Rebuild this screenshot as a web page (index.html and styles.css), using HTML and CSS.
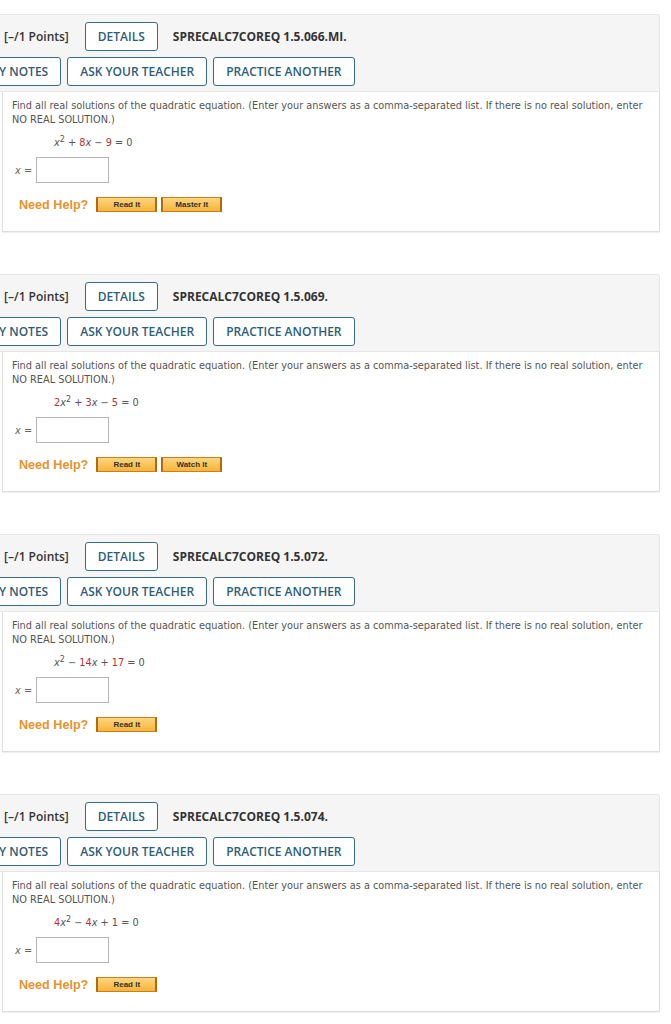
FILE: index.html
```html
<!DOCTYPE html>
<html lang="en">
<head>
  <meta charset="UTF-8" />
  <title>Assignment</title>
  <link rel="stylesheet" href="styles.css">
</head>
<body>
  <div class="page">

    <div class="question">
      <div class="q-head">
        <div class="head-row">
          <span class="points">[&ndash;/1 Points]</span>
          <button class="wa-btn">DETAILS</button>
          <span class="q-id">SPRECALC7COREQ 1.5.066.MI.</span>
        </div>
        <div class="head-row tools">
          <button class="wa-btn">MY NOTES</button>
          <button class="wa-btn">ASK YOUR TEACHER</button>
          <button class="wa-btn">PRACTICE ANOTHER</button>
        </div>
      </div>
      <div class="q-body">
        <p class="prompt">Find all real solutions of the quadratic equation. (Enter your answers as a comma-separated list. If there is no real solution, enter NO REAL SOLUTION.)</p>
        <div class="equation"><i>x</i><sup>2</sup> + <span class="num">8</span><i>x</i> &minus; <span class="num">9</span> = 0</div>
        <div class="answer"><span class="lbl"><i>x</i> =</span><input class="ans-box" type="text"></div>
        <div class="help">
          <span class="need">Need Help?</span>
          <button class="help-btn">Read It</button>
          <button class="help-btn">Master It</button>
        </div>
      </div>
    </div>

    <div class="question">
      <div class="q-head">
        <div class="head-row">
          <span class="points">[&ndash;/1 Points]</span>
          <button class="wa-btn">DETAILS</button>
          <span class="q-id">SPRECALC7COREQ 1.5.069.</span>
        </div>
        <div class="head-row tools">
          <button class="wa-btn">MY NOTES</button>
          <button class="wa-btn">ASK YOUR TEACHER</button>
          <button class="wa-btn">PRACTICE ANOTHER</button>
        </div>
      </div>
      <div class="q-body">
        <p class="prompt">Find all real solutions of the quadratic equation. (Enter your answers as a comma-separated list. If there is no real solution, enter NO REAL SOLUTION.)</p>
        <div class="equation"><span class="num">2</span><i>x</i><sup>2</sup> + <span class="num">3</span><i>x</i> &minus; <span class="num">5</span> = 0</div>
        <div class="answer"><span class="lbl"><i>x</i> =</span><input class="ans-box" type="text"></div>
        <div class="help">
          <span class="need">Need Help?</span>
          <button class="help-btn">Read It</button>
          <button class="help-btn">Watch It</button>
        </div>
      </div>
    </div>

    <div class="question">
      <div class="q-head">
        <div class="head-row">
          <span class="points">[&ndash;/1 Points]</span>
          <button class="wa-btn">DETAILS</button>
          <span class="q-id">SPRECALC7COREQ 1.5.072.</span>
        </div>
        <div class="head-row tools">
          <button class="wa-btn">MY NOTES</button>
          <button class="wa-btn">ASK YOUR TEACHER</button>
          <button class="wa-btn">PRACTICE ANOTHER</button>
        </div>
      </div>
      <div class="q-body">
        <p class="prompt">Find all real solutions of the quadratic equation. (Enter your answers as a comma-separated list. If there is no real solution, enter NO REAL SOLUTION.)</p>
        <div class="equation"><i>x</i><sup>2</sup> &minus; <span class="num">14</span><i>x</i> + <span class="num">17</span> = 0</div>
        <div class="answer"><span class="lbl"><i>x</i> =</span><input class="ans-box" type="text"></div>
        <div class="help">
          <span class="need">Need Help?</span>
          <button class="help-btn">Read It</button>
        </div>
      </div>
    </div>

    <div class="question">
      <div class="q-head">
        <div class="head-row">
          <span class="points">[&ndash;/1 Points]</span>
          <button class="wa-btn">DETAILS</button>
          <span class="q-id">SPRECALC7COREQ 1.5.074.</span>
        </div>
        <div class="head-row tools">
          <button class="wa-btn">MY NOTES</button>
          <button class="wa-btn">ASK YOUR TEACHER</button>
          <button class="wa-btn">PRACTICE ANOTHER</button>
        </div>
      </div>
      <div class="q-body">
        <p class="prompt">Find all real solutions of the quadratic equation. (Enter your answers as a comma-separated list. If there is no real solution, enter NO REAL SOLUTION.)</p>
        <div class="equation"><span class="num">4</span><i>x</i><sup>2</sup> &minus; <span class="num">4</span><i>x</i> + 1 = 0</div>
        <div class="answer"><span class="lbl"><i>x</i> =</span><input class="ans-box" type="text"></div>
        <div class="help">
          <span class="need">Need Help?</span>
          <button class="help-btn">Read It</button>
        </div>
      </div>
    </div>

  </div>
</body>
</html>
```

FILE: styles.css
```css
body {
  margin: 0;
  background: #fff;
  font-family: "Open Sans", sans-serif;
  color: #333;
}
.page {
  width: 660px;
  padding-top: 14px;
}
.question {
  margin-bottom: 42px;
}
.q-head {
  height: 78px;
  box-sizing: border-box;
  background: #f5f5f5;
  border: 1px solid #e6e6e6;
  border-left: none;
  border-radius: 0 3px 0 0;
  overflow: hidden;
  padding-top: 7px;
}
.head-row {
  display: flex;
  align-items: center;
  height: 29px;
  padding-left: 4px;
}
.head-row.tools {
  margin-top: 6px;
  margin-left: -29px;
  gap: 6px;
}
.points {
  font-size: 12px;
  font-weight: 600;
  color: #333;
  margin-right: 16px;
}
.q-id {
  font-size: 12px;
  font-weight: 700;
  color: #333;
  margin-left: 15px;
}
.wa-btn {
  height: 29px;
  box-sizing: border-box;
  padding: 0 12px;
  background: #fff;
  border: 1.5px solid #3a6b86;
  border-radius: 3px;
  font-family: "Open Sans", sans-serif;
  font-size: 12px;
  font-weight: 600;
  color: #2e5d78;
}
.q-body {
  margin-left: 2px;
  background: #fff;
  border: 1px solid #dedede;
  border-top: none;
  box-shadow: 0 1px 1px rgba(0, 0, 0, 0.06);
  padding: 7px 9px 19px;
  font-family: "DejaVu Sans", Verdana, sans-serif;
  font-size: 9.75px;
  color: #555;
}
.prompt {
  margin: 0;
  line-height: 14px;
}
.equation {
  margin: 9px 0 0 42px;
  line-height: 14px;
  color: #555;
}
.equation sup {
  font-size: 8px;
  line-height: 0;
}
.num {
  color: #b83232;
}
.answer {
  display: flex;
  align-items: center;
  margin-top: 7px;
}
.lbl {
  margin: 0 4px 0 3px;
  color: #666;
}
.ans-box {
  width: 73px;
  height: 26px;
  box-sizing: border-box;
  border: 1px solid #b5b5b5;
  margin: 0;
  padding: 0;
}
.help {
  display: flex;
  align-items: center;
  gap: 4px;
  margin: 14px 0 0 7px;
}
.need {
  font-family: "Liberation Sans", Arial, sans-serif;
  font-size: 12.6px;
  font-weight: 700;
  color: #e8922e;
  margin-right: 4px;
}
.help-btn {
  width: 61px;
  height: 15px;
  box-sizing: border-box;
  padding: 0;
  border: 1px solid #c9801a;
  border-left: 2px solid #b06a10;
  border-right: 2px solid #b06a10;
  background: linear-gradient(#fcd680, #f7b43a);
  font-family: "Liberation Sans", Arial, sans-serif;
  font-size: 8px;
  font-weight: 700;
  color: #333;
}
```
